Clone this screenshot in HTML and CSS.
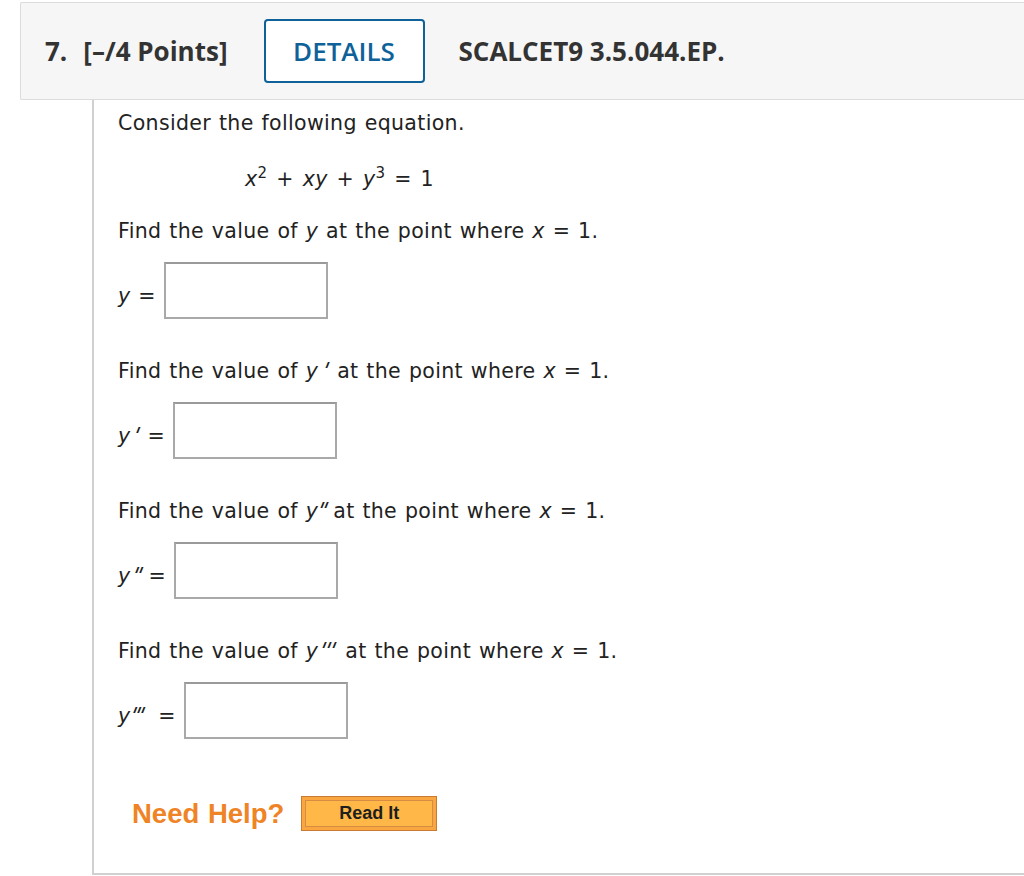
FILE: index.html
```html
<!DOCTYPE html>
<html lang="en">
<head>
    <meta charset="UTF-8">
    <meta name="viewport" content="width=device-width, initial-scale=1.0">
    <title>SCALCET9 3.5.044.EP.</title>
    <link rel="stylesheet" href="styles.css">
</head>
<body>
    <div class="q-header">
        <span class="q-num">7.</span>
        <span class="q-points">[&ndash;/4 Points]</span>
        <button class="btn-details">DETAILS</button>
        <span class="q-code">SCALCET9 3.5.044.EP.</span>
    </div>
    <div class="q-body">
        <p class="line">Consider the following equation.</p>
        <p class="line equation"><i>x</i><sup>2</sup> + <i>xy</i> + <i>y</i><sup>3</sup> = 1</p>

        <p class="line">Find the value of <i>y</i> at the point where <i>x</i> = 1.</p>
        <div class="answer">
            <span class="ans-label"><i>y</i> =</span>
            <input class="ans-box" type="text">
        </div>

        <p class="line">Find the value of <i>y</i><span class="prime p1">'</span> at the point where <i>x</i> = 1.</p>
        <div class="answer">
            <span class="ans-label"><i>y</i><span class="prime lp1">'</span> =</span>
            <input class="ans-box" type="text">
        </div>

        <p class="line">Find the value of <i>y</i><span class="prime p2">''</span> at the point where <i>x</i> = 1.</p>
        <div class="answer">
            <span class="ans-label"><i>y</i><span class="prime lp2">''</span> =</span>
            <input class="ans-box" type="text">
        </div>

        <p class="line">Find the value of <i>y</i><span class="prime p3">'''</span> at the point where <i>x</i> = 1.</p>
        <div class="answer">
            <span class="ans-label"><i>y</i><span class="prime lp3">'''</span> &nbsp;=</span>
            <input class="ans-box" type="text">
        </div>

        <div class="help">
            <span class="help-title">Need Help?</span>
            <button class="btn-read">Read It</button>
        </div>
    </div>
</body>
</html>
```

FILE: styles.css
```css
body {
    margin: 0;
    padding: 0;
    background-color: white;
    font-family: "DejaVu Sans", Verdana, sans-serif;
    color: #222;
}
.q-header {
    margin: 2px 0 0 20px;
    height: 96px;
    background-color: #f6f6f6;
    border: 1px solid #dcdcdc;
    border-right: none;
    border-radius: 2px 0 0 2px;
    display: flex;
    align-items: center;
    font-family: "Open Sans", sans-serif;
    font-weight: 700;
    font-size: 26px;
    color: #333;
}
.q-num {
    margin-left: 24px;
}
.q-points {
    margin-left: 16px;
}
.btn-details {
    margin-left: 36px;
    width: 161px;
    height: 64px;
    background-color: white;
    border: 2px solid #0e6299;
    border-radius: 4px;
    font-family: "Open Sans", sans-serif;
    font-weight: 600;
    font-size: 26px;
    color: #0e6299;
    padding: 0;
}
.q-code {
    margin-left: 34px;
}
.q-body {
    margin-left: 92px;
    border-left: 2px solid #d0d0d0;
    border-bottom: 2px solid #d0d0d0;
    padding: 11px 0 42px 24px;
    font-size: 20.5px;
    letter-spacing: 0.35px;
    word-spacing: 1px;
}
.line {
    margin: 0;
    line-height: 24px;
}
.equation {
    margin: 32px 0 28px 127px;
    word-spacing: 2px;
}
.equation sup {
    font-size: 15px;
    line-height: 0;
}
.prime {
    display: inline-block;
    transform: skewX(-22deg);
    letter-spacing: -2px;
    font-size: 22px;
}
.p1 {
    margin-left: 4px;
    margin-right: 3px;
}
.p2 {
    margin-left: -1px;
}
.p3 {
    margin-left: 1px;
    margin-right: 3px;
    letter-spacing: -1px;
}
.lp1 {
    margin-left: 3px;
    margin-right: 2px;
}
.lp2 {
    margin-left: 2px;
}
.lp3 {
    margin-left: 0;
}
.answer {
    display: flex;
    align-items: center;
    margin: 19px 0 40px 0;
}
.ans-label {
    margin-right: 8px;
    padding-top: 10px;
}
.ans-box {
    width: 164px;
    height: 57px;
    box-sizing: border-box;
    border: 2px solid #a9a9a9;
    border-top-color: #9a9a9a;
    background-color: white;
    margin: 0;
}
.help {
    display: flex;
    align-items: center;
    margin: 57px 0 0 14px;
}
.help-title {
    font-family: "Liberation Sans", Arial, sans-serif;
    font-weight: bold;
    font-size: 27.5px;
    color: #ef8427;
    letter-spacing: 0;
}
.btn-read {
    margin-left: 17px;
    width: 136px;
    height: 35px;
    background-color: #ffb747;
    border: 1px solid #c97b34;
    box-shadow: inset 0 0 0 3px #f9a640, inset 0 0 0 4px #d68d43;
    font-family: "Liberation Sans", Arial, sans-serif;
    font-weight: bold;
    font-size: 18px;
    color: #1e1e1e;
    padding: 0;
    letter-spacing: 0;
}
```
